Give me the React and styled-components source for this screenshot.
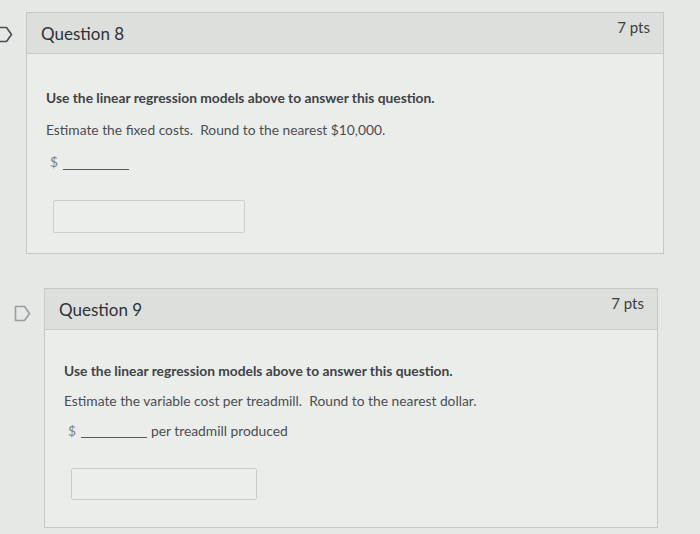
import React from 'react'
import styled, { createGlobalStyle } from 'styled-components'

const GlobalStyle = createGlobalStyle`
  html, body {
    margin: 0;
    padding: 0;
    background: #e6e8e5;
    font-family: Lato, "Open Sans", sans-serif;
    color: #3b3e42;
  }
`

const Page = styled.div`
  width: 700px;
  height: 534px;
  overflow: hidden;
  padding-top: 12px;
  box-sizing: border-box;
  display: flex;
  flex-direction: column;
  gap: 34px;
`

const Row = styled.div`
  display: flex;
  align-items: flex-start;
  gap: 13px;
  margin-left: ${p => p.$left}px;
  width: ${p => p.$width}px;
`

const Flag = styled.svg`
  flex: none;
  margin-top: ${p => p.$top}px;
`

const Card = styled.div`
  flex: 1;
  border: 1px solid #c6c8c5;
  background: #ebedea;
`

const Header = styled.div`
  height: 40px;
  display: flex;
  align-items: center;
  justify-content: space-between;
  padding: 0 13px 0 14px;
  background: #dddfdc;
  border-bottom: 1px solid #c9cbc8;
`

const Title = styled.h2`
  margin: 0;
  font-size: 17px;
  font-weight: 400;
  color: #2f3236;
`

const Points = styled.span`
  font-size: 15px;
  color: #3a3d41;
  margin-top: -12px;
`

const Body = styled.div`
  padding: ${p => (p.$dense ? '26px 19px 27px' : '28px 19px 20px')};
  font-size: 13.8px;
  line-height: ${p => (p.$dense ? 30 : 32)}px;
`

const Lead = styled.p`
  margin: 0;
  font-weight: 700;
  color: #404347;
`

const Line = styled.p`
  margin: 0;
  color: #4a4d51;
`

const Blank = styled.span`
  display: inline-block;
  width: 66px;
  height: 1px;
  background: #55585c;
  margin: 0 4px 0 5px;
  vertical-align: ${p => (p.$dense ? '-2px' : '-3px')};
`

const Dollar = styled.span`
  color: #7d8084;
  padding-left: 4px;
`

const Answer = styled.div`
  width: ${p => p.$w}px;
  height: ${p => p.$h}px;
  margin: 22px 0 0 7px;
  border: 1px solid #cdcfcc;
  border-radius: 2px;
  background: #eceeeb;
`

const FlagIcon = ({ top, color }) => (
  <Flag $top={top} width="17" height="17" viewBox="0 0 17 17">
    <path
      d="M1.5 1.5 H10.5 L15.5 8.5 L10.5 15.5 H1.5 Z"
      fill="none"
      stroke={color}
      strokeWidth="1.6"
      strokeLinejoin="round"
    />
  </Flag>
)

const Question = ({ number, left, width, flagTop, flagColor, dense, lines, after, box }) => (
  <Row $left={left} $width={width}>
    <FlagIcon top={flagTop} color={flagColor} />
    <Card>
      <Header>
        <Title>Question {number}</Title>
        <Points>7 pts</Points>
      </Header>
      <Body $dense={dense}>
        <Lead>Use the linear regression models above to answer this question.</Lead>
        <Line>{lines}</Line>
        <Line>
          <Dollar>$</Dollar>
          <Blank $dense={dense} />
          {after}
        </Line>
        <Answer $w={box[0]} $h={box[1]} />
      </Body>
    </Card>
  </Row>
)

export default function App() {
  return (
    <>
      <GlobalStyle />
      <Page>
        <Question
          number={8}
          left={-4}
          width={668}
          flagTop={14}
          flagColor="#4a4d52"
          lines={'Estimate the fixed costs.\u00a0 Round to the nearest $10,000.'}
          after=""
          box={[190, 31]}
        />
        <Question
          number={9}
          left={14}
          width={644}
          flagTop={17}
          flagColor="#9a9da0"
          dense
          lines={'Estimate the variable cost per treadmill.\u00a0 Round to the nearest dollar.'}
          after="per treadmill produced"
          box={[184, 30]}
        />
      </Page>
    </>
  )
}
